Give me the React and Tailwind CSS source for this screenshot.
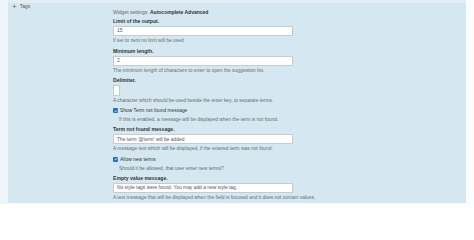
export default function App() {
  const Label = ({ children, top = "" }) => (
    <div className={`h-[9px] leading-[9px] font-bold text-[#333] text-[5.1px] ${top}`}>{children}</div>
  );
  const Desc = ({ children, indent }) => (
    <div className={`h-[10px] leading-[10px] text-[#6b6b6b] text-[4.9px] ${indent ? "pl-[6px]" : ""}`}>{children}</div>
  );
  const Input = ({ value }) => (
    <div className="h-[10px] w-[180px] bg-white border border-[#c3ccd2] px-[3px] flex items-center text-[4.9px] text-[#555]">
      {value}
    </div>
  );
  const Check = ({ label }) => (
    <div className="h-[10px] flex items-center gap-[2px] text-[4.9px] text-[#333]">
      <span className="w-[5px] h-[5px] rounded-[1px] bg-[#2072d3] flex items-center justify-center">
        <svg viewBox="0 0 10 10" className="w-[4px] h-[4px]">
          <path d="M2 5.2 L4.2 7.4 L8 2.8" fill="none" stroke="white" strokeWidth="1.8" />
        </svg>
      </span>
      {label}
    </div>
  );

  return (
    <div className="w-[474px] h-[204px] bg-[#fbfdfe] flex overflow-hidden" style={{ fontFamily: '"Liberation Sans", Arial, sans-serif' }}>
      <div className="w-[8px] h-full bg-[#edf5f9]" />
      <div className="w-[458px] h-[203px] bg-[#d5e8f1] border-t-[3px] border-[#e2eef4] flex">
        <div className="w-[105px] pl-[4px] pt-[1px]">
          <div className="h-[6px] flex items-center gap-[3px] text-[5px] text-[#555]">
            <span className="text-[8px] leading-none text-[#666] font-light">+</span>
            <span>Tags</span>
          </div>
        </div>
        <div className="flex flex-col">
          <div className="h-[9px] leading-[9px] mt-[5px] text-[5px] text-[#666]">
            Widget settings: <span className="font-bold text-[#333]">Autocomplete Advanced</span>
          </div>
          <Label>Limit of the output.</Label>
          <Input value="15" />
          <Desc>If set to zero no limit will be used</Desc>
          <Label top="mt-[1px]">Minimum length.</Label>
          <Input value="2" />
          <Desc>The minimum length of characters to enter to open the suggestion list.</Desc>
          <Label>Delimiter.</Label>
          <div className="h-[11px] w-[7px] bg-white border border-[#c3ccd2]" />
          <Desc>A character which should be used beside the enter key, to separate terms.</Desc>
          <Check label="Show Term not found message" />
          <Desc indent>If this is enabled, a message will be displayed when the term is not found.</Desc>
          <Label>Term not found message.</Label>
          <Input value="The term '@term' will be added" />
          <Desc>A message text which will be displayed, if the entered term was not found.</Desc>
          <Check label="Allow new terms" />
          <Desc indent>Should it be allowed, that user enter new terms?</Desc>
          <Label>Empty value message.</Label>
          <Input value="No style tags were found. You may add a new style tag." />
          <Desc>A text message that will be displayed when the field is focused and it does not contain values.</Desc>
        </div>
      </div>
    </div>
  );
}
